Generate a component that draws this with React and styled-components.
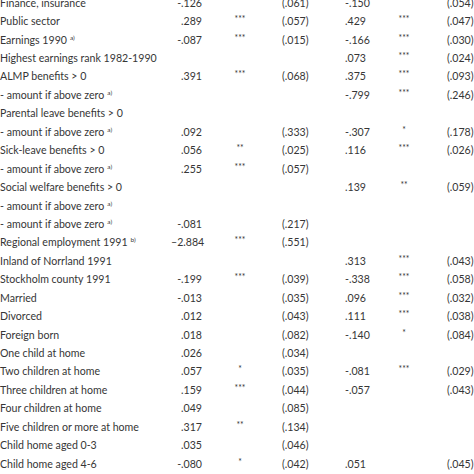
import React from "react";
import styled, { createGlobalStyle } from "styled-components";

const GlobalStyle = createGlobalStyle`
  html, body {
    margin: 0;
    padding: 0;
    background: #ffffff;
    overflow: hidden;
  }
`;

const StyledTable = styled.section`
  display: flex;
  flex-direction: column;
  margin-top: -6.3px;
  width: 474px;
  font-family: Lato, "Open Sans", sans-serif;
  font-size: 10.6px;
  color: #363636;
  white-space: nowrap;
`;

const StyledRow = styled.div`
  display: grid;
  grid-template-columns: 171px 31px 76px 67px 41px 36px 52px;
  height: 18.44px;
  line-height: 18.44px;
`;

const Cell = styled.div`
  text-align: ${(p) => p.$align || "left"};
  padding-left: ${(p) => p.$pad || 0}px;
`;

const Stars = styled.span`
  font-size: 8.5px;
  line-height: 0;
  vertical-align: 3px;
`;

const Note = styled.sup`
  font-size: 6.5px;
  line-height: 0;
  margin-left: 3px;
  vertical-align: 4px;
`;

const ROWS = [
  ["Finance, insurance", "", "-.126", "", "(.061)", "-.150", "", "(.054)"],
  ["Public sector", "", ".289", "***", "(.057)", ".429", "***", "(.047)"],
  ["Earnings 1990", "a)", "-.087", "***", "(.015)", "-.166", "***", "(.030)"],
  ["Highest earnings rank 1982-1990", "", "", "", "", ".073", "***", "(.024)"],
  ["ALMP benefits > 0", "", ".391", "***", "(.068)", ".375", "***", "(.093)"],
  ["- amount if above zero", "a)", "", "", "", "-.799", "***", "(.246)"],
  ["Parental leave benefits > 0", "", "", "", "", "", "", ""],
  ["- amount if above zero", "a)", ".092", "", "(.333)", "-.307", "*", "(.178)"],
  ["Sick-leave benefits > 0", "", ".056", "**", "(.025)", ".116", "***", "(.026)"],
  ["- amount if above zero", "a)", ".255", "***", "(.057)", "", "", ""],
  ["Social welfare benefits > 0", "", "", "", "", ".139", "**", "(.059)"],
  ["- amount if above zero", "a)", "", "", "", "", "", ""],
  ["- amount if above zero", "a)", "-.081", "", "(.217)", "", "", ""],
  ["Regional employment 1991", "b)", "\u20132.884", "***", "(.551)", "", "", ""],
  ["Inland of Norrland 1991", "", "", "", "", ".313", "***", "(.043)"],
  ["Stockholm county 1991", "", "-.199", "***", "(.039)", "-.338", "***", "(.058)"],
  ["Married", "", "-.013", "", "(.035)", ".096", "***", "(.032)"],
  ["Divorced", "", ".012", "", "(.043)", ".111", "***", "(.038)"],
  ["Foreign born", "", ".018", "", "(.082)", "-.140", "*", "(.084)"],
  ["One child at home", "", ".026", "", "(.034)", "", "", ""],
  ["Two children at home", "", ".057", "*", "(.035)", "-.081", "***", "(.029)"],
  ["Three children at home", "", ".159", "***", "(.044)", "-.057", "", "(.043)"],
  ["Four children at home", "", ".049", "", "(.085)", "", "", ""],
  ["Five children or more at home", "", ".317", "**", "(.134)", "", "", ""],
  ["Child home aged 0-3", "", ".035", "", "(.046)", "", "", ""],
  ["Child home aged 4-6", "", "-.080", "*", "(.042)", ".051", "", "(.045)"],
];

const App = () => {
  return (
    <>
      <GlobalStyle />
      <StyledTable>
        {ROWS.map((r, i) => (
          <StyledRow key={i}>
            <Cell>
              {r[0]}
              {r[1] && <Note>{r[1]}</Note>}
            </Cell>
            <Cell $align="right">{r[2]}</Cell>
            <Cell $align="center">
              <Stars>{r[3]}</Stars>
            </Cell>
            <Cell $pad={4}>{r[4]}</Cell>
            <Cell>{r[5]}</Cell>
            <Cell $align="center">
              <Stars>{r[6]}</Stars>
            </Cell>
            <Cell $pad={25}>{r[7]}</Cell>
          </StyledRow>
        ))}
      </StyledTable>
    </>
  );
};

export default App;
